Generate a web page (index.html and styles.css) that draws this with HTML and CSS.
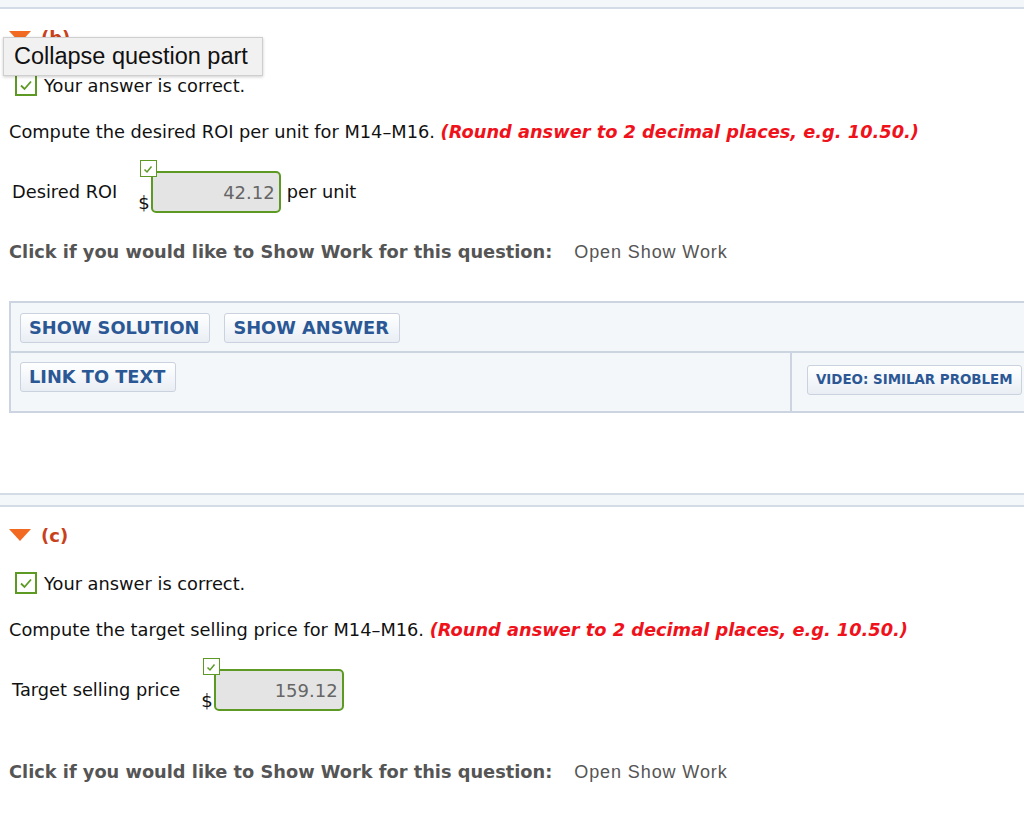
FILE: index.html
```html
<!DOCTYPE html>
<html>
<head>
<meta charset="utf-8">
<link rel="stylesheet" href="styles.css">
</head>
<body>
<div class="page">
  <div class="band top"></div>

  <section class="part">
    <div class="part-head"><span class="tri"></span><span class="plabel">(b)</span></div>
    <div class="tooltip">Collapse question part</div>
    <div class="correct">
      <span class="cb"><svg viewBox="0 0 18 18" width="18" height="18"><path d="M4 9.5 L7.5 13 L14 5.5" fill="none" stroke="#5d9a24" stroke-width="1.8"/></svg></span>
      <span>Your answer is correct.</span>
    </div>
    <p class="q">Compute the desired ROI per unit for M14–M16. <em class="hint">(Round answer to 2 decimal places, e.g. 10.50.)</em></p>
    <div class="arow">
      <span class="alabel">Desired ROI</span>
      <span class="cur">$</span>
      <span class="fwrap">
        <span class="mini"><svg viewBox="0 0 14 14" width="14" height="14"><path d="M3.5 7.5 L6 10 L10.5 4.5" fill="none" stroke="#5d9a24" stroke-width="1.5"/></svg></span>
        <span class="field">42.12</span>
      </span>
      <span class="unit">per unit</span>
    </div>
    <div class="sw"><span class="swl">Click if you would like to Show Work for this question:</span><span class="swo">Open Show Work</span></div>

    <div class="panel">
      <div class="prow first">
        <span class="btn">SHOW SOLUTION</span>
        <span class="btn">SHOW ANSWER</span>
      </div>
      <div class="prow second">
        <div class="pcell left"><span class="btn">LINK TO TEXT</span></div>
        <div class="pcell right"><span class="btn small">VIDEO: SIMILAR PROBLEM</span></div>
      </div>
    </div>
  </section>

  <div class="band mid"></div>

  <section class="part">
    <div class="part-head"><span class="tri"></span><span class="plabel">(c)</span></div>
    <div class="correct">
      <span class="cb"><svg viewBox="0 0 18 18" width="18" height="18"><path d="M4 9.5 L7.5 13 L14 5.5" fill="none" stroke="#5d9a24" stroke-width="1.8"/></svg></span>
      <span>Your answer is correct.</span>
    </div>
    <p class="q">Compute the target selling price for M14–M16. <em class="hint">(Round answer to 2 decimal places, e.g. 10.50.)</em></p>
    <div class="arow">
      <span class="alabel">Target selling price</span>
      <span class="cur">$</span>
      <span class="fwrap">
        <span class="mini"><svg viewBox="0 0 14 14" width="14" height="14"><path d="M3.5 7.5 L6 10 L10.5 4.5" fill="none" stroke="#5d9a24" stroke-width="1.5"/></svg></span>
        <span class="field">159.12</span>
      </span>
    </div>
    <div class="sw last"><span class="swl">Click if you would like to Show Work for this question:</span><span class="swo">Open Show Work</span></div>
  </section>
</div>
</body>
</html>
```
FILE: styles.css
```css
html, body { margin: 0; padding: 0; background: #fff; overflow: hidden; }
body { font-family: "DejaVu Sans", Verdana, sans-serif; font-size: 17.8px; color: #111; }
.page { width: 1060px; }

.band { background: #f4f7fa; border-bottom: 2px solid #d3dbe6; }
.band.top { height: 7px; }
.band.mid { height: 10px; border-top: 2px solid #d3dbe6; margin-top: 80px; }

.part { position: relative; padding-left: 9px; }
.part-head { display: flex; align-items: center; height: 20px; padding-top: 18px; }
.tri { width: 0; height: 0; border-left: 11px solid transparent; border-right: 11px solid transparent; border-top: 12px solid #f26a22; margin-right: 10px; }
.plabel { color: #c9411b; font-weight: bold; font-size: 18px; }

.tooltip { position: absolute; left: 3px; top: 28px; width: 248px; height: 37px; padding-left: 10px; background: #f1f1f1; border: 1px solid #cfcfcf; box-shadow: 0 1px 3px rgba(0,0,0,0.2); font-family: "Liberation Sans", Arial, sans-serif; font-size: 23.5px; line-height: 37px; color: #111; }

.correct { display: flex; align-items: center; margin-top: 27px; padding-left: 6px; height: 22px; }
.cb { width: 18px; height: 18px; border: 2px solid #5d9a24; background: #fff; margin-right: 7px; display: flex; }

.q { margin: 25px 0 0 0; line-height: 22px; }
.hint { color: #f0121b; font-weight: bold; }

.arow { display: flex; align-items: center; margin-top: 17px; padding-left: 3px; height: 53px; }
.alabel { margin-right: 21px; padding-top: 10px; }
.cur { align-self: flex-end; margin-right: 1px; line-height: 18px; margin-bottom: 1px; font-size: 18px; }
.fwrap { position: relative; align-self: flex-end; }
.mini { position: absolute; left: -11px; top: -11px; width: 15px; height: 15px; border: 1px solid #5d9a24; background: #fff; display: flex; align-items: center; justify-content: center; }
.field { display: block; width: 122px; height: 38px; border: 2px solid #5d9a24; border-radius: 5px; background: #e4e4e4; color: #666; text-align: right; padding-right: 4px; line-height: 40px; font-size: 18px; }
.unit { margin-left: 6px; padding-top: 10px; }

.sw { margin-top: 28px; line-height: 22px; display: flex; }
.sw.last { margin-top: 50px; }
.swl { font-weight: bold; color: #555; }
.swo { margin-left: 22px; font-family: "Liberation Sans", Arial, sans-serif; font-size: 18px; letter-spacing: 0.9px; color: #555; }

.panel { margin-top: 38px; width: 1040px; background: #f4f7fa; border: 2px solid #cbd4e0; }
.prow.first { display: flex; gap: 14px; padding: 10px 9px 8px; border-bottom: 2px solid #cbd4e0; }
.prow.second { display: flex; height: 58px; }
.pcell.left { width: 770px; padding: 9px 0 0 9px; border-right: 2px solid #cbd4e0; }
.pcell.right { padding: 12px 0 0 15px; }
.btn { display: inline-block; height: 28px; line-height: 28px; padding: 0 10px 0 8px; border: 1px solid #c9d2de; border-radius: 3px; background: linear-gradient(#ffffff, #e9eef4); color: #2b5895; font-weight: bold; font-size: 17.8px; white-space: nowrap; }
.btn.small { font-size: 13.4px; padding: 0 8px; }
```
